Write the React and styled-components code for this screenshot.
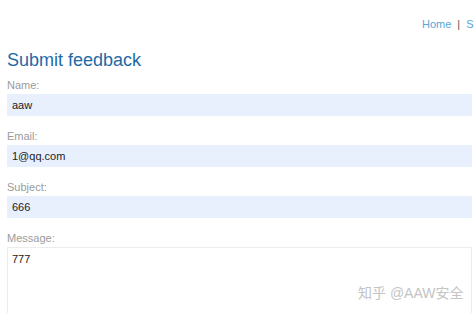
import React from "react";
import styled, { createGlobalStyle } from "styled-components";

const GlobalStyle = createGlobalStyle`
  html, body {
    margin: 0;
    padding: 0;
    background: #fff;
    overflow: hidden;
  }
  body {
    font-family: "Liberation Sans", Arial, sans-serif;
  }
`;

export const Page = styled.div`
  position: relative;
  width: 474px;
  height: 313px;
  padding: 18px 2px 0 7px;
  box-sizing: border-box;
  overflow: hidden;
`;

export const Header = styled.div`
  padding-left: 415px;
  white-space: nowrap;
  font-size: 11px;
  line-height: 13px;
  color: #5aa5d6;
`;

export const NavLink = styled.a`
  color: inherit;
  text-decoration: none;
`;

export const Divider = styled.span`
  color: #555;
  margin: 0 6px;
`;

export const Title = styled.h1`
  margin: 18px 0 7px;
  font-size: 18px;
  line-height: 22px;
  font-weight: 400;
  color: #1e6aa6;
`;

export const Form = styled.form`
  display: flex;
  flex-direction: column;
`;

export const Label = styled.label`
  font-size: 11px;
  line-height: 14px;
  color: #9b9b9b;
  margin-bottom: 2px;
`;

export const Input = styled.input`
  height: 22px;
  box-sizing: border-box;
  margin: 0 0 13px;
  padding: 0 5px;
  border: none;
  background: #e8f0fe;
  font-family: inherit;
  font-size: 11px;
  color: #222;
  outline: none;
`;

export const TextArea = styled.textarea`
  height: 100px;
  box-sizing: border-box;
  margin: 0;
  padding: 4px 4px;
  border: 1px solid #ececec;
  background: #fff;
  font-family: inherit;
  font-size: 11px;
  line-height: 14px;
  color: #222;
  resize: none;
  outline: none;
`;

export const Watermark = styled.div`
  position: absolute;
  left: 358px;
  top: 284px;
  font-family: "Liberation Sans", "Noto Sans CJK SC", sans-serif;
  font-size: 14px;
  line-height: 18px;
  color: #c4c4c4;
  text-shadow: 0 0 1px #fff;
  white-space: nowrap;
`;

const fields = [
  { id: "name", label: "Name:", value: "aaw" },
  { id: "email", label: "Email:", value: "1@qq.com" },
  { id: "subject", label: "Subject:", value: "666" },
];

const App = () => {
  return (
    <>
      <GlobalStyle />
      <Page>
        <Header>
          <NavLink href="#">Home</NavLink>
          <Divider>|</Divider>
          <NavLink href="#">Submit feedback</NavLink>
        </Header>
        <Title>Submit feedback</Title>
        <Form onSubmit={(e) => e.preventDefault()}>
          {fields.map((f) => (
            <React.Fragment key={f.id}>
              <Label htmlFor={f.id}>{f.label}</Label>
              <Input id={f.id} defaultValue={f.value} />
            </React.Fragment>
          ))}
          <Label htmlFor="message">Message:</Label>
          <TextArea id="message" defaultValue="777" />
        </Form>
        <Watermark>知乎 @AAW安全</Watermark>
      </Page>
    </>
  );
};

export default App;
